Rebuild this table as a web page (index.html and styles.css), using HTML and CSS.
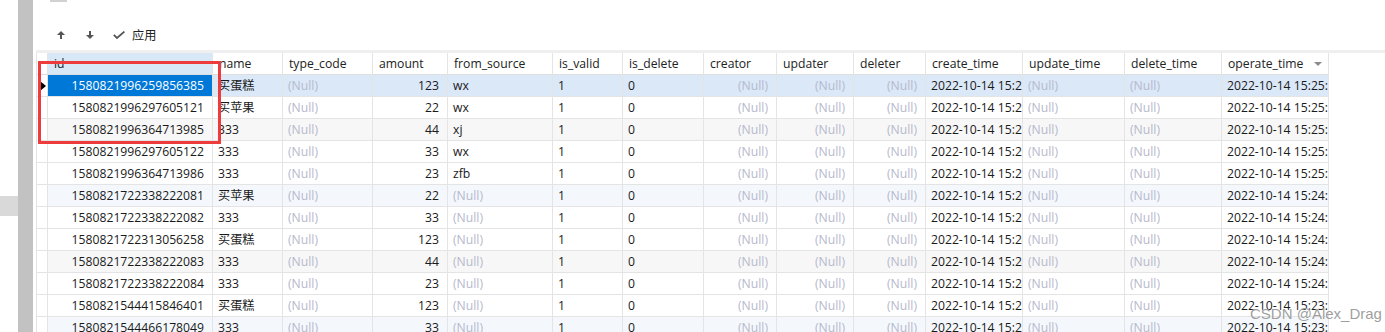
FILE: index.html
```html
<!DOCTYPE html>
<html lang="zh">
<head>
    <meta charset="UTF-8">
    <title>Navicat 表格</title>
    <link rel="stylesheet" href="styles.css">
</head>
<body>
    <div class="app">
        <div class="side"><div class="side-item"></div></div>
        <div class="splitter"></div>
        <div class="main">
            <div class="top">
                <div class="tab-edge"></div>
                <div class="toolbar">
                    <span class="tool up"><svg width="8" height="8" viewBox="0 0 8 8"><path d="M4 0 L8 4 H5 V8 H3 V4 H0 Z" fill="#555"/></svg></span>
                    <span class="tool down"><svg width="8" height="8" viewBox="0 0 8 8"><path d="M4 8 L8 4 H5 V0 H3 V4 H0 Z" fill="#555"/></svg></span>
                    <span class="tool apply"><svg width="12" height="8" viewBox="0 0 12 8"><polyline points="0.8,3.8 4,7 11.4,0.6" fill="none" stroke="#555" stroke-width="1.8"/></svg>应用</span>
                </div>
            </div>
            <div class="band"></div>
            <div class="grid">
                <div class="row head">
                    <div class="c rh"></div>
                    <div class="c sel-col">id</div>
                    <div class="c">name</div>
                    <div class="c">type_code</div>
                    <div class="c">amount</div>
                    <div class="c">from_source</div>
                    <div class="c">is_valid</div>
                    <div class="c">is_delete</div>
                    <div class="c">creator</div>
                    <div class="c">updater</div>
                    <div class="c">deleter</div>
                    <div class="c">create_time</div>
                    <div class="c">update_time</div>
                    <div class="c">delete_time</div>
                    <div class="c sort">operate_time<span class="sort-arrow"></span></div>
                </div>
                <div class="row selected">
                    <div class="c rh"><span class="cursor"></span></div>
                    <div class="c r cur">1580821996259856385</div>
                    <div class="c">买蛋糕</div>
                    <div class="c n">(Null)</div>
                    <div class="c r">123</div>
                    <div class="c">wx</div>
                    <div class="c">1</div>
                    <div class="c">0</div>
                    <div class="c r n">(Null)</div>
                    <div class="c r n">(Null)</div>
                    <div class="c r n">(Null)</div>
                    <div class="c">2022-10-14 15:25:38</div>
                    <div class="c n">(Null)</div>
                    <div class="c n">(Null)</div>
                    <div class="c">2022-10-14 15:25:38</div>
                </div>
                <div class="row">
                    <div class="c rh"></div>
                    <div class="c r">1580821996297605121</div>
                    <div class="c">买苹果</div>
                    <div class="c n">(Null)</div>
                    <div class="c r">22</div>
                    <div class="c">wx</div>
                    <div class="c">1</div>
                    <div class="c">0</div>
                    <div class="c r n">(Null)</div>
                    <div class="c r n">(Null)</div>
                    <div class="c r n">(Null)</div>
                    <div class="c">2022-10-14 15:25:38</div>
                    <div class="c n">(Null)</div>
                    <div class="c n">(Null)</div>
                    <div class="c">2022-10-14 15:25:38</div>
                </div>
                <div class="row gray">
                    <div class="c rh"></div>
                    <div class="c r">1580821996364713985</div>
                    <div class="c">333</div>
                    <div class="c n">(Null)</div>
                    <div class="c r">44</div>
                    <div class="c">xj</div>
                    <div class="c">1</div>
                    <div class="c">0</div>
                    <div class="c r n">(Null)</div>
                    <div class="c r n">(Null)</div>
                    <div class="c r n">(Null)</div>
                    <div class="c">2022-10-14 15:25:38</div>
                    <div class="c n">(Null)</div>
                    <div class="c n">(Null)</div>
                    <div class="c">2022-10-14 15:25:38</div>
                </div>
                <div class="row">
                    <div class="c rh"></div>
                    <div class="c r">1580821996297605122</div>
                    <div class="c">333</div>
                    <div class="c n">(Null)</div>
                    <div class="c r">33</div>
                    <div class="c">wx</div>
                    <div class="c">1</div>
                    <div class="c">0</div>
                    <div class="c r n">(Null)</div>
                    <div class="c r n">(Null)</div>
                    <div class="c r n">(Null)</div>
                    <div class="c">2022-10-14 15:25:38</div>
                    <div class="c n">(Null)</div>
                    <div class="c n">(Null)</div>
                    <div class="c">2022-10-14 15:25:38</div>
                </div>
                <div class="row">
                    <div class="c rh"></div>
                    <div class="c r">1580821996364713986</div>
                    <div class="c">333</div>
                    <div class="c n">(Null)</div>
                    <div class="c r">23</div>
                    <div class="c">zfb</div>
                    <div class="c">1</div>
                    <div class="c">0</div>
                    <div class="c r n">(Null)</div>
                    <div class="c r n">(Null)</div>
                    <div class="c r n">(Null)</div>
                    <div class="c">2022-10-14 15:25:38</div>
                    <div class="c n">(Null)</div>
                    <div class="c n">(Null)</div>
                    <div class="c">2022-10-14 15:25:38</div>
                </div>
                <div class="row blue">
                    <div class="c rh"></div>
                    <div class="c r">1580821722338222081</div>
                    <div class="c">买苹果</div>
                    <div class="c n">(Null)</div>
                    <div class="c r">22</div>
                    <div class="c n">(Null)</div>
                    <div class="c">1</div>
                    <div class="c">0</div>
                    <div class="c r n">(Null)</div>
                    <div class="c r n">(Null)</div>
                    <div class="c r n">(Null)</div>
                    <div class="c">2022-10-14 15:24:33</div>
                    <div class="c n">(Null)</div>
                    <div class="c n">(Null)</div>
                    <div class="c">2022-10-14 15:24:33</div>
                </div>
                <div class="row">
                    <div class="c rh"></div>
                    <div class="c r">1580821722338222082</div>
                    <div class="c">333</div>
                    <div class="c n">(Null)</div>
                    <div class="c r">33</div>
                    <div class="c n">(Null)</div>
                    <div class="c">1</div>
                    <div class="c">0</div>
                    <div class="c r n">(Null)</div>
                    <div class="c r n">(Null)</div>
                    <div class="c r n">(Null)</div>
                    <div class="c">2022-10-14 15:24:33</div>
                    <div class="c n">(Null)</div>
                    <div class="c n">(Null)</div>
                    <div class="c">2022-10-14 15:24:33</div>
                </div>
                <div class="row">
                    <div class="c rh"></div>
                    <div class="c r">1580821722313056258</div>
                    <div class="c">买蛋糕</div>
                    <div class="c n">(Null)</div>
                    <div class="c r">123</div>
                    <div class="c n">(Null)</div>
                    <div class="c">1</div>
                    <div class="c">0</div>
                    <div class="c r n">(Null)</div>
                    <div class="c r n">(Null)</div>
                    <div class="c r n">(Null)</div>
                    <div class="c">2022-10-14 15:24:33</div>
                    <div class="c n">(Null)</div>
                    <div class="c n">(Null)</div>
                    <div class="c">2022-10-14 15:24:33</div>
                </div>
                <div class="row gray">
                    <div class="c rh"></div>
                    <div class="c r">1580821722338222083</div>
                    <div class="c">333</div>
                    <div class="c n">(Null)</div>
                    <div class="c r">44</div>
                    <div class="c n">(Null)</div>
                    <div class="c">1</div>
                    <div class="c">0</div>
                    <div class="c r n">(Null)</div>
                    <div class="c r n">(Null)</div>
                    <div class="c r n">(Null)</div>
                    <div class="c">2022-10-14 15:24:33</div>
                    <div class="c n">(Null)</div>
                    <div class="c n">(Null)</div>
                    <div class="c">2022-10-14 15:24:33</div>
                </div>
                <div class="row">
                    <div class="c rh"></div>
                    <div class="c r">1580821722338222084</div>
                    <div class="c">333</div>
                    <div class="c n">(Null)</div>
                    <div class="c r">23</div>
                    <div class="c n">(Null)</div>
                    <div class="c">1</div>
                    <div class="c">0</div>
                    <div class="c r n">(Null)</div>
                    <div class="c r n">(Null)</div>
                    <div class="c r n">(Null)</div>
                    <div class="c">2022-10-14 15:24:33</div>
                    <div class="c n">(Null)</div>
                    <div class="c n">(Null)</div>
                    <div class="c">2022-10-14 15:24:33</div>
                </div>
                <div class="row">
                    <div class="c rh"></div>
                    <div class="c r">1580821544415846401</div>
                    <div class="c">买蛋糕</div>
                    <div class="c n">(Null)</div>
                    <div class="c r">123</div>
                    <div class="c n">(Null)</div>
                    <div class="c">1</div>
                    <div class="c">0</div>
                    <div class="c r n">(Null)</div>
                    <div class="c r n">(Null)</div>
                    <div class="c r n">(Null)</div>
                    <div class="c">2022-10-14 15:23:51</div>
                    <div class="c n">(Null)</div>
                    <div class="c n">(Null)</div>
                    <div class="c">2022-10-14 15:23:51</div>
                </div>
                <div class="row blue">
                    <div class="c rh"></div>
                    <div class="c r">1580821544466178049</div>
                    <div class="c">333</div>
                    <div class="c n">(Null)</div>
                    <div class="c r">33</div>
                    <div class="c n">(Null)</div>
                    <div class="c">1</div>
                    <div class="c">0</div>
                    <div class="c r n">(Null)</div>
                    <div class="c r n">(Null)</div>
                    <div class="c r n">(Null)</div>
                    <div class="c">2022-10-14 15:23:51</div>
                    <div class="c n">(Null)</div>
                    <div class="c n">(Null)</div>
                    <div class="c">2022-10-14 15:23:51</div>
                </div>
            </div>
        </div>
        <div class="marca"></div>
        <div class="watermark">CSDN @Alex_Drag</div>
    </div>
</body>
</html>
```

FILE: styles.css
```css
* {
    margin: 0;
    padding: 0;
    box-sizing: border-box;
}
body {
    font-family: 'Open Sans', 'Noto Sans CJK SC', sans-serif;
    font-size: 12.2px;
    color: #1a1a1a;
    background-color: #fff;
    overflow: hidden;
}
.app {
    position: relative;
    display: flex;
    width: 1385px;
    height: 332px;
    overflow: hidden;
}
.side {
    flex: 0 0 18px;
}
.side-item {
    margin-top: 196px;
    height: 20px;
    background-color: #d9d9d9;
}
.splitter {
    flex: 0 0 15px;
    background-color: #c2c2c2;
}
.main {
    flex: 1;
    padding-left: 3px;
}
.top {
    height: 50px;
}
.tab-edge {
    margin-left: 14px;
    width: 17px;
    height: 2px;
    background-color: #d2d2d2;
}
.toolbar {
    display: flex;
    align-items: center;
    height: 22px;
    margin-top: 22px;
    padding-left: 21px;
    color: #222;
}
.tool {
    display: flex;
    align-items: center;
}
.tool.down {
    margin-left: 21px;
}
.tool.apply {
    margin-left: 19px;
    gap: 7px;
}
.band {
    height: 3px;
    background-color: #efefef;
}
.grid {
    border-left: 1px solid #e4e4e4;
    width: 1293px;
}
.row {
    display: grid;
    grid-template-columns: 11px 165px 70px 90px 75px 105px 70px 81px 73px 77px 72px 97px 102px 97px 107px;
    height: 22px;
}
.c {
    height: 22px;
    line-height: 21px;
    padding: 0 8px 0 5px;
    border-right: 1px solid #e4e4e4;
    border-bottom: 1px solid #e4e4e4;
    white-space: nowrap;
    overflow: hidden;
}
.c.r {
    text-align: right;
}
.c.n {
    color: #b6b9cc;
}
.c.rh {
    padding: 0 0 0 3px;
    background-color: #fff;
    display: flex;
    align-items: center;
}
.head .c {
    color: #222;
    padding-left: 6px;
    border-bottom-color: #dedede;
}
.head .sel-col {
    background-color: #d9e8f7;
}
.sort {
    display: flex;
    align-items: center;
}
.sort-arrow {
    margin-left: auto;
    margin-right: -2px;
    border-top: 4px solid #8c8c8c;
    border-left: 4.5px solid transparent;
    border-right: 4.5px solid transparent;
}
.row.selected {
    background-color: #dae8f8;
}
.row.gray {
    background-color: #f7f7f7;
}
.row.blue {
    background-color: #f4f8fd;
}
.c.cur {
    background-color: #0078d7;
    color: #fff;
}
.cursor {
    border-left: 6px solid #000;
    border-top: 5px solid transparent;
    border-bottom: 5px solid transparent;
}
.marca {
    position: absolute;
    left: 38px;
    top: 61px;
    width: 183px;
    height: 83px;
    border: 3px solid #ee3b3b;
}
.watermark {
    position: absolute;
    left: 1250px;
    top: 305px;
    font-family: 'Liberation Sans', sans-serif;
    font-size: 15px;
    color: rgba(140, 140, 140, 0.85);
    text-shadow: 0 0 1px #fff;
}
```
